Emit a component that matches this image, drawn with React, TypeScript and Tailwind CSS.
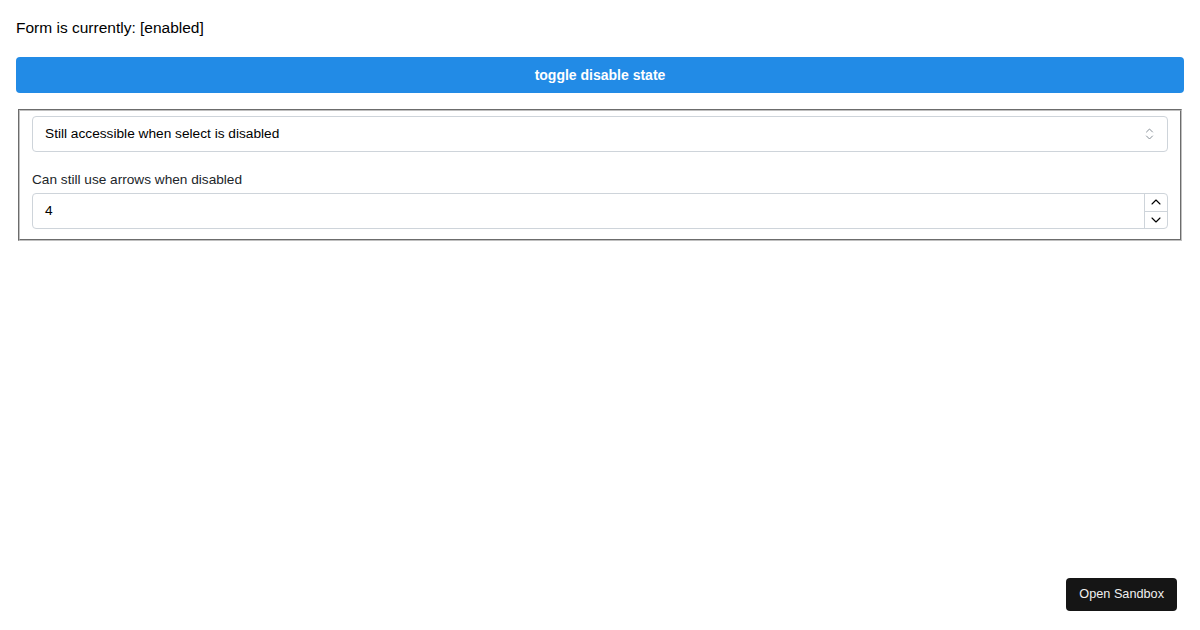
import React from "react";

export default function App() {
  return (
    <div
      className="relative w-[1200px] h-[630px] bg-white p-4 text-black"
      style={{ fontFamily: '"Liberation Sans", Arial, sans-serif' }}
    >
      <div className="h-6 leading-6 text-[15.5px]">Form is currently: [enabled]</div>
      <button className="mt-[17px] w-full h-9 rounded-[4px] bg-[#228be6] text-white text-sm font-bold flex items-center justify-center">
        toggle disable state
      </button>
      <fieldset className="mt-4 mx-[2px] border-2 [border-style:groove] border-[#c0c0c0] pt-[5px] px-3 pb-[10px]">
        <div className="relative h-9 rounded-[4px] border border-[#ced4da] flex items-center pl-3 text-[13.7px] text-[#000]">
          Still accessible when select is disabled
          <svg
            className="absolute right-[10px] top-1/2 -translate-y-1/2"
            width="15"
            height="15"
            viewBox="0 0 15 15"
            fill="none"
          >
            <path
              d="M4.5 5.5L7.5 2.5L10.5 5.5M4.5 9.5L7.5 12.5L10.5 9.5"
              stroke="#868e96"
              strokeWidth="1"
              strokeLinecap="round"
              strokeLinejoin="round"
            />
          </svg>
        </div>
        <div className="mt-[17px] h-[22px] leading-[22px] text-[13.65px] text-[#212529] mb-[2px]">
          Can still use arrows when disabled
        </div>
        <div className="relative h-9 rounded-[4px] border border-[#ced4da] flex items-center pl-3 text-[13.65px] text-[#000]">
          4
          <div className="absolute right-0 top-0 bottom-0 w-[23px] border-l border-[#ced4da] flex flex-col">
            <div className="flex-1 flex items-center justify-center border-b border-[#ced4da]">
              <svg width="10" height="6" viewBox="0 0 10 6" fill="none">
                <path d="M1 5L5 1L9 5" stroke="#000" strokeWidth="1.1" strokeLinecap="round" strokeLinejoin="round" />
              </svg>
            </div>
            <div className="flex-1 flex items-center justify-center">
              <svg width="10" height="6" viewBox="0 0 10 6" fill="none">
                <path d="M1 1L5 5L9 1" stroke="#000" strokeWidth="1.1" strokeLinecap="round" strokeLinejoin="round" />
              </svg>
            </div>
          </div>
        </div>
      </fieldset>
      <button className="absolute right-[23px] bottom-[19px] h-[33px] px-[13px] rounded-[4px] bg-[#151515] text-[#f0f0f0] text-[12.7px]">
        Open Sandbox
      </button>
    </div>
  );
}
